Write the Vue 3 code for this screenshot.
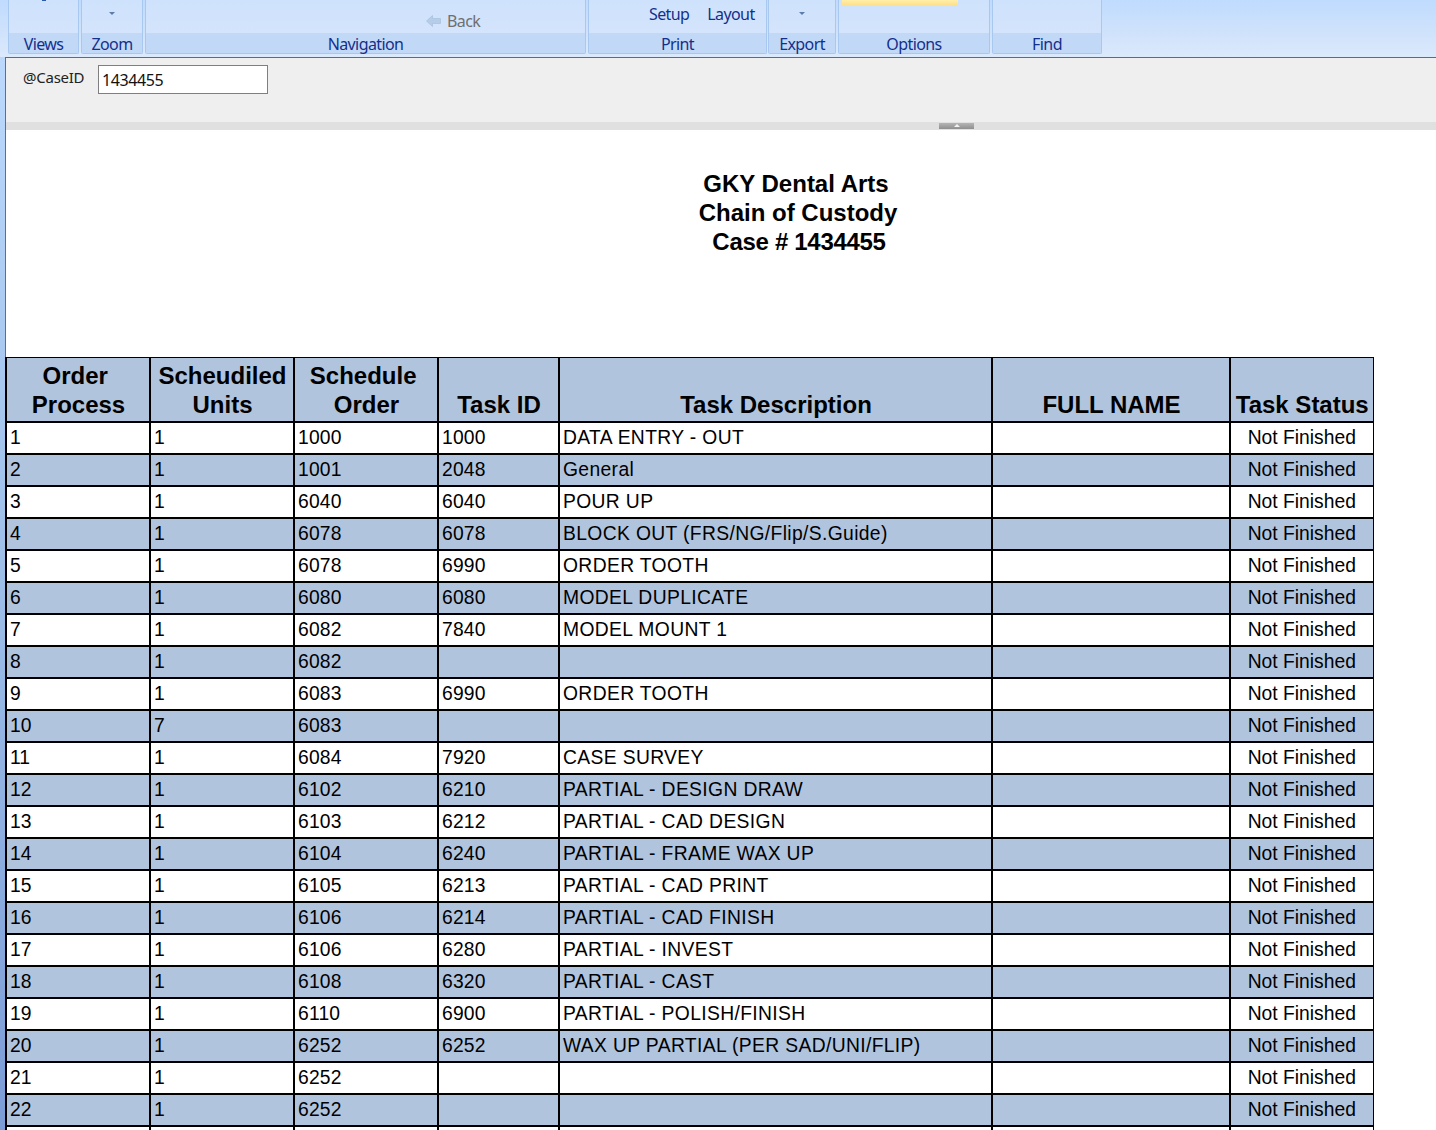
<script setup>
const groups = [
  { name: 'Views', cls: 'g-views' },
  { name: 'Zoom', cls: 'g-zoom' },
  { name: 'Navigation', cls: 'g-nav' },
  { name: 'Print', cls: 'g-print' },
  { name: 'Export', cls: 'g-export' },
  { name: 'Options', cls: 'g-options' },
  { name: 'Find', cls: 'g-find' },
]

const rows = [
  [1, 1, 1000, 1000, 'DATA ENTRY - OUT'],
  [2, 1, 1001, 2048, 'General'],
  [3, 1, 6040, 6040, 'POUR UP'],
  [4, 1, 6078, 6078, 'BLOCK OUT (FRS/NG/Flip/S.Guide)'],
  [5, 1, 6078, 6990, 'ORDER TOOTH'],
  [6, 1, 6080, 6080, 'MODEL DUPLICATE'],
  [7, 1, 6082, 7840, 'MODEL MOUNT 1'],
  [8, 1, 6082, '', ''],
  [9, 1, 6083, 6990, 'ORDER TOOTH'],
  [10, 7, 6083, '', ''],
  [11, 1, 6084, 7920, 'CASE SURVEY'],
  [12, 1, 6102, 6210, 'PARTIAL - DESIGN DRAW'],
  [13, 1, 6103, 6212, 'PARTIAL - CAD DESIGN'],
  [14, 1, 6104, 6240, 'PARTIAL - FRAME WAX UP'],
  [15, 1, 6105, 6213, 'PARTIAL - CAD PRINT'],
  [16, 1, 6106, 6214, 'PARTIAL - CAD FINISH'],
  [17, 1, 6106, 6280, 'PARTIAL - INVEST'],
  [18, 1, 6108, 6320, 'PARTIAL - CAST'],
  [19, 1, 6110, 6900, 'PARTIAL - POLISH/FINISH'],
  [20, 1, 6252, 6252, 'WAX UP PARTIAL (PER SAD/UNI/FLIP)'],
  [21, 1, 6252, '', ''],
  [22, 1, 6252, '', ''],
  ['', '', '', '', ''],
]
</script>

<template>
  <div class="viewer">
    <div class="ribbon">
      <div v-for="g in groups" :key="g.name" class="group" :class="g.cls">
        <div class="group-body">
          <template v-if="g.name === 'Views'">
            <span class="cut-icon"></span>
          </template>
          <template v-else-if="g.name === 'Zoom' || g.name === 'Export'">
            <span class="drop-arrow"></span>
          </template>
          <template v-else-if="g.name === 'Navigation'">
            <span class="back">
              <svg width="15" height="12" viewBox="0 0 15 12">
                <path d="M0.5 6 L6.5 0.5 V3.5 H14.5 V8.5 H6.5 V11.5 Z" fill="#b5cde8" stroke="#a3bcd9" stroke-width="0.6" />
              </svg>
              Back
            </span>
          </template>
          <template v-else-if="g.name === 'Print'">
            <span class="print-btn">Setup</span>
            <span class="print-btn">Layout</span>
          </template>
          <template v-else-if="g.name === 'Options'">
            <span class="active-btn"></span>
          </template>
        </div>
        <div class="group-label">{{ g.name }}</div>
      </div>
    </div>

    <div class="content">
      <div class="params">
        <label class="param-label">@CaseID</label>
        <input class="param-input" type="text" value="1434455" />
      </div>
      <div class="splitter">
        <span class="splitter-handle"><span class="splitter-arrow"></span></span>
      </div>

      <div class="report">
        <div class="title">
          <div class="title-first">GKY Dental Arts</div>
          <div>Chain of Custody</div>
          <div class="title-last">Case # 1434455</div>
        </div>

        <table class="tasks">
          <colgroup>
            <col class="c-order" />
            <col class="c-units" />
            <col class="c-sched" />
            <col class="c-task" />
            <col class="c-desc" />
            <col class="c-name" />
            <col class="c-status" />
          </colgroup>
          <thead>
            <tr>
              <th>Order&nbsp;<br />Process</th>
              <th>Scheudiled<br />Units</th>
              <th>Schedule&nbsp;<br />Order</th>
              <th>Task ID</th>
              <th>Task Description</th>
              <th>FULL NAME</th>
              <th>Task Status</th>
            </tr>
          </thead>
          <tbody>
            <tr v-for="(row, i) in rows" :key="i" :class="{ alt: i % 2 === 1 }">
              <td v-for="(cell, j) in row" :key="j">{{ cell }}</td>
              <td></td>
              <td class="status">{{ i < 22 ? 'Not Finished' : '' }}</td>
            </tr>
          </tbody>
        </table>
      </div>
    </div>
  </div>
</template>

<style>
html, body {
  margin: 0;
  background: #fff;
}
</style>

<style scoped>
.viewer {
  position: relative;
  width: 1436px;
  height: 1130px;
  overflow: hidden;
  /* pale blue strip at the window's left edge */
  background: linear-gradient(to bottom, #bfdbff, #9dbfe8 50%, #7c9cd6);
}

.ribbon {
  display: flex;
  gap: 2px;
  height: 57px;
  box-sizing: border-box;
  padding-left: 8px;
  background: linear-gradient(to bottom, #bfdbff 0%, #cfe2fb 55%, #dbe9fb 100%);
  font-family: "Noto Sans", sans-serif;
  font-size: 16px;
  letter-spacing: -0.6px;
  color: #12308c;
}

.group {
  display: flex;
  flex-direction: column;
  height: 54px;
  box-sizing: border-box;
  border-left: 1px solid #a9c8ef;
  border-right: 1px solid #a9c8ef;
  border-bottom: 1px solid #a9c8ef;
  border-radius: 0 0 2px 2px;
}

.g-views { width: 71px; }
.g-zoom { width: 62px; }
.g-nav { width: 441px; }
.g-print { width: 179px; }
.g-export { width: 68px; margin-left: -1px; }
.g-options { width: 152px; }
.g-find { width: 110px; }

.group-body {
  flex: 1;
  display: flex;
  background: linear-gradient(to bottom, #cfe2fd 0%, #d3e4fb 100%);
}

.group-label {
  height: 20px;
  line-height: 22px;
  text-align: center;
  background: #c2d8f7;
  white-space: nowrap;
}

.g-views .group-body,
.g-zoom .group-body,
.g-export .group-body {
  justify-content: center;
}

.cut-icon {
  width: 4px;
  height: 1px;
  background: #2a5aa8;
}

.drop-arrow {
  width: 0;
  height: 0;
  margin-top: 12px;
  border-left: 3px solid transparent;
  border-right: 3px solid transparent;
  border-top: 3px solid #5b7cab;
}

.back {
  display: flex;
  align-items: center;
  gap: 6px;
  height: 16px;
  margin: 13px 0 0 280px;
  color: #6f6f6f;
}

.print-btn {
  height: 28px;
  line-height: 28px;
}
.print-btn:first-child {
  margin-left: 60px;
  margin-right: 18px;
}

.active-btn {
  width: 116px;
  height: 5px;
  margin-left: 3px;
  background: linear-gradient(to bottom, #ffefa8, #ffe08a);
}

.content {
  height: 1073px;
  margin-left: 5px;
  border-left: 1px solid #5f6f86;
  border-top: 1px solid #5f6b7c;
}

.params {
  display: flex;
  align-items: flex-start;
  gap: 13px;
  height: 64px;
  box-sizing: border-box;
  padding: 7px 0 0 17px;
  background: #efefef;
  font-family: "Noto Sans", sans-serif;
}

.param-label {
  width: 62px;
  font-size: 15px;
  letter-spacing: -0.25px;
  line-height: 24px;
  color: #222;
  white-space: nowrap;
}

.param-input {
  width: 170px;
  height: 29px;
  box-sizing: border-box;
  padding: 0 3px;
  border: 1px solid #7f7f7f;
  background: #fff;
  font-family: "Noto Sans", sans-serif;
  font-size: 16px;
  letter-spacing: -0.4px;
  color: #111;
  outline: none;
}

.splitter {
  display: flex;
  height: 8px;
  background: #e0e0e0;
}

.splitter-handle {
  display: flex;
  justify-content: center;
  width: 35px;
  height: 6px;
  margin: 1px 0 0 933px;
  background: linear-gradient(to bottom, #b5b5b5, #8f8f8f);
}

.splitter-arrow {
  width: 0;
  height: 0;
  margin-top: 1px;
  border-left: 3px solid transparent;
  border-right: 3px solid transparent;
  border-bottom: 3px solid #f4f4f4;
}

.report {
  height: 1000px;
  background: #fff;
  font-family: "Liberation Sans", Arial, sans-serif;
  color: #000;
}

.title {
  height: 88px;
  padding: 39px 0 100px 154px;
  font-size: 24px;
  font-weight: 700;
  line-height: 29px;
  text-align: center;
}

.title-first {
  padding-right: 4px;
}

.title-last {
  padding-left: 2px;
  letter-spacing: -0.3px;
}

.tasks {
  table-layout: fixed;
  border-collapse: collapse;
  width: 1368px;
  margin-left: -1px;
  font-size: 19.3px;
}

.c-order, .c-units, .c-sched { width: 144px; }
.c-task { width: 121px; }
.c-desc { width: 433px; }
.c-name { width: 238px; }
.c-status { width: 143px; }

.tasks th {
  height: 64px;
  padding: 0 0 2px 1px;
  box-sizing: border-box;
  vertical-align: bottom;
  text-align: center;
  background: #b0c4de;
  border: 2px solid #000;
  border-top-width: 1px;
  font-size: 24px;
  font-weight: 700;
  line-height: 29px;
  white-space: nowrap;
}

.tasks td {
  height: 32px;
  padding: 0 3px;
  box-sizing: border-box;
  border: 2px solid #000;
  white-space: nowrap;
  overflow: hidden;
}

.tasks td:nth-child(3),
.tasks td:nth-child(4) {
  letter-spacing: 0.2px;
}

.tasks td:nth-child(5) {
  letter-spacing: 0.36px;
}

.tasks th:last-child,
.tasks td:last-child {
  border-right-width: 1px;
}

.tasks tr.alt td {
  background: #b0c4de;
}

.tasks td.status {
  text-align: center;
}
</style>
